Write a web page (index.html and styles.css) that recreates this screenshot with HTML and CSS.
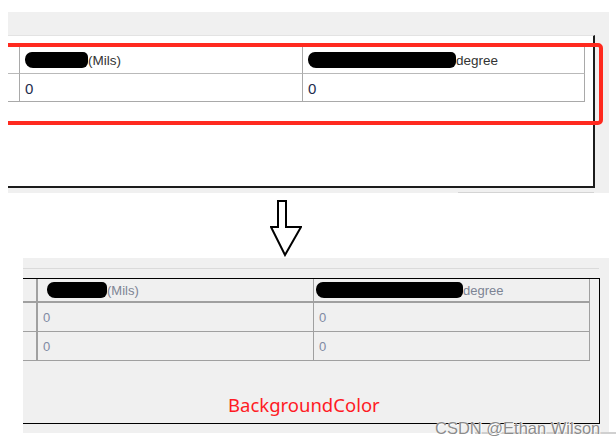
FILE: index.html
```html
<!DOCTYPE html>
<html lang="en">
<head>
  <meta charset="UTF-8">
  <title>BackgroundColor</title>
  <link rel="stylesheet" href="styles.css">
</head>
<body>

<!-- before: white grid -->
<section class="shot shot-top">
  <div class="panel-top">
    <div class="grid grid-top">
      <div class="cell head stub"></div>
      <div class="cell head"><span class="blob blob-a"></span>(Mils)</div>
      <div class="cell head"><span class="blob blob-b"></span>degree</div>
      <div class="cell stub"></div>
      <div class="cell value">0</div>
      <div class="cell value">0</div>
    </div>
  </div>
  <div class="scroll-rest"></div>
  <div class="mark"></div>
</section>

<div class="arrow-gap">
  <svg class="arrow" width="32" height="57" viewBox="0 0 32 57">
    <polygon points="8,1 16,1 16,27 31,27 15,55 1,27 8,27" fill="#fff" stroke="#000" stroke-width="2" stroke-linejoin="miter"/>
  </svg>
</div>

<!-- after: grid on the form colour -->
<section class="shot shot-bottom">
  <div class="panel-bottom">
    <div class="frame">
      <div class="grid grid-bottom">
        <div class="cell head stub"></div>
        <div class="cell head"><span class="blob blob-c"></span>(Mils)</div>
        <div class="cell head"><span class="blob blob-d"></span>degree</div>
        <div class="cell stub"></div>
        <div class="cell value">0</div>
        <div class="cell value">0</div>
        <div class="cell stub"></div>
        <div class="cell value">0</div>
        <div class="cell value">0</div>
      </div>
      <div class="caption">BackgroundColor</div>
    </div>
  </div>
  <div class="scroll-rest scroll-rest-low"></div>
  <div class="watermark">CSDN @Ethan Wilson</div>
</section>

</body>
</html>
```

FILE: styles.css
```css
:root {
  --form: #f0f0f0;
  --line: #a9a9a9;
  --ink: #000;
}

* {
  box-sizing: border-box;
}

body {
  margin: 0;
  width: 616px;
  height: 444px;
  overflow: hidden;
  background: #fff;
  font-family: 'Liberation Sans', Arial, sans-serif;
}

.shot {
  position: relative;
  background: var(--form);
}

/* top screenshot */
.shot-top {
  margin: 12px 0 0 8px;
  width: 601px;
  height: 181px;
  padding-top: 23px;
  overflow: hidden;
}

.panel-top {
  width: 587px;
  height: 153px;
  padding-top: 11px;
  background: #fff;
  border-top: 1px solid #e3e3e3;
  border-right: 2px solid #1c1c1c;
  border-bottom: 2px solid #1c1c1c;
}

.grid {
  display: grid;
}

.grid-top {
  grid-template-columns: 12px 283px 282px;
  grid-template-rows: 27px 28px;
}

.cell {
  display: flex;
  align-items: center;
  padding-left: 5px;
  border-right: 1px solid var(--line);
  border-bottom: 1px solid var(--line);
  font-size: 13px;
  white-space: nowrap;
  overflow: hidden;
}

.grid-top .head {
  color: #333;
  border-bottom-color: #b9b9b9;
  font-size: 13.5px;
}

.grid-top .value {
  font-size: 15px;
  color: #1d2d4e;
  padding-top: 1px;
}

.blob {
  display: inline-block;
  height: 16px;
  background: var(--ink);
  border-radius: 7px 5px 6px 8px;
}

.blob-a { width: 63px; }
.blob-b { width: 148px; }
.blob-c { width: 60px; margin-left: 4px; }
.blob-d { width: 147px; margin-left: -3px; }

.mark {
  position: absolute;
  top: 31px;
  left: -10px;
  width: 605px;
  height: 82px;
  border: 4px solid #ff2a1f;
  border-radius: 5px;
}

.scroll-rest {
  margin: 4px 0 0 450px;
  width: 136px;
  height: 1px;
  background: #d4d4d4;
}

/* arrow */
.arrow-gap {
  height: 65px;
  padding: 7px 0 0 270px;
}

.arrow {
  display: block;
}

/* bottom screenshot */
.shot-bottom {
  margin-left: 23px;
  width: 586px;
  height: 175px;
  padding-top: 10px;
}

.panel-bottom {
  width: 576px;
  padding-top: 9px;
  border-top: 1px solid #dadada;
}

.frame {
  width: 577px;
  height: 146px;
  border-top: 1px solid var(--ink);
  border-right: 1px solid var(--ink);
  border-bottom: 1px solid var(--ink);
}

.grid-bottom {
  grid-template-columns: 15px 276px 276px;
  grid-template-rows: 24px 29px 29px;
}

.grid-bottom .cell {
  border-color: #a0a0a0;
}

.grid-bottom .stub {
  border-right-width: 2px;
}

.grid-bottom .head {
  color: #7d8494;
  border-bottom-width: 2px;
}

.grid-bottom .value {
  font-size: 13px;
  color: #7f8aa3;
}

.caption {
  margin-top: 34px;
  padding-left: 205px;
  font-family: 'Noto Sans', sans-serif;
  font-size: 18.5px;
  line-height: 20px;
  color: #ff1a24;
}

.scroll-rest-low {
  margin: 8px 0 0 452px;
  width: 143px;
  height: 2px;
  background: #d0d0d0;
}

.watermark {
  position: absolute;
  left: 412px;
  top: 162px;
  font-size: 16.5px;
  line-height: 17px;
  color: #8c8c8c;
  text-shadow: 0 0 1px #fff, 1px 1px 0 #fff;
  white-space: nowrap;
}
```
